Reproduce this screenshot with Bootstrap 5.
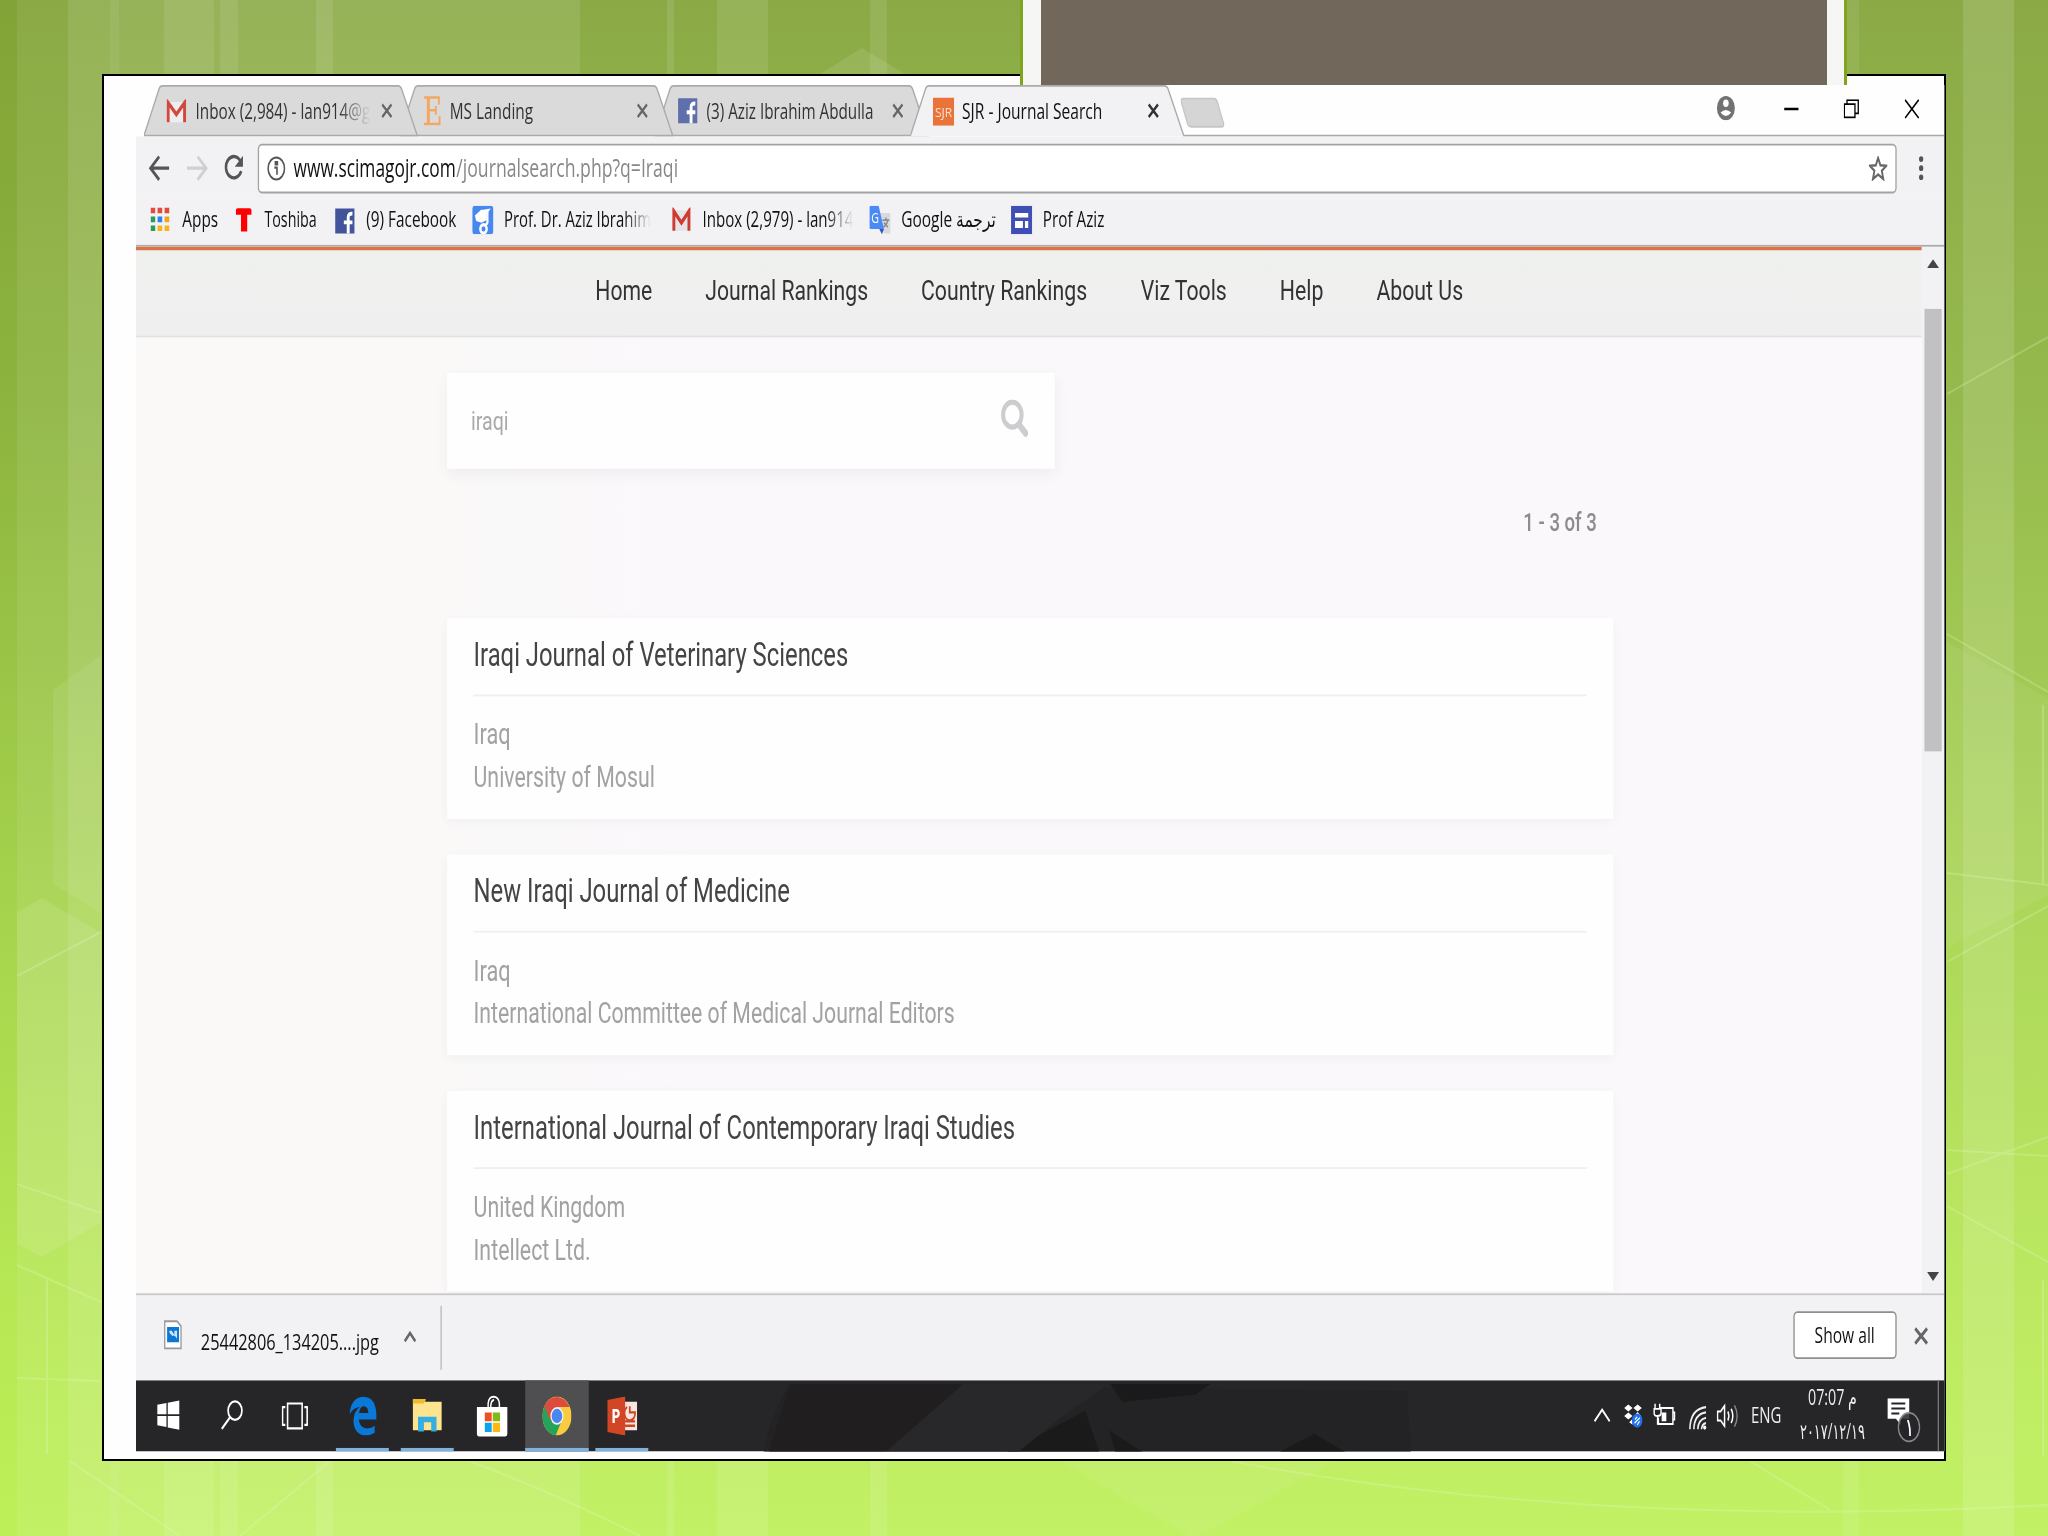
<!DOCTYPE html>
<html lang="en">
<head>
<meta charset="utf-8">
<title>SJR - Journal Search</title>
<link href="https://cdn.jsdelivr.net/npm/bootstrap@5.3.0/dist/css/bootstrap.min.css" rel="stylesheet">
<style>
html,body{margin:0;height:1536px;overflow:hidden}
.slide{position:relative;width:2048px;height:1536px;overflow:hidden;background:#a5cc52}
.slide-art{position:absolute;inset:0}
.frame{position:absolute;left:102px;top:74px;width:1844px;height:1387px;background:#fefefe;border:2px solid #000}
.tab-shape{position:absolute;left:1023px;top:0;width:821px;height:85px;background:#71675a;border:solid #f6f7f4;border-width:0 17px 0 18px;box-shadow:-3px 0 0 #7ea51c,3px 0 0 #7ea51c}
/* The captured desktop is 1366x768, stretched to the slide's picture size */
.desk{position:absolute;left:136px;top:84.5px;width:1366px;height:768.6px;transform-origin:0 0;transform:scale(1.3238,1.777);font-family:"Open Sans","DejaVu Sans",sans-serif;font-size:12px;line-height:16px;color:#111;background:#fff;overflow:hidden}
.desk svg{display:block;flex:none}
.fit{display:inline-block;white-space:nowrap;transform-origin:0 50%}
.strip{height:29px;background:#fefefe;padding-left:5.5px}
.tb{position:relative;width:206.5px;height:29px;margin-right:-13.5px;padding:0 0 0 17px;color:#333}
.tb:nth-child(1){z-index:3}
.tb:nth-child(2){z-index:2}
.tb>svg.shape{position:absolute;left:0;top:0}
.tb .ico{position:relative;width:16px;margin-right:4px}
.tb .lbl{position:relative;overflow:hidden;padding-top:1px}
.tb.on{z-index:4;color:#111}
.tb .x{position:relative;margin-left:4px}
.tools{height:34.5px;background:#f2f1f3;padding-top:4px}
.omni{width:1238px;height:28px;border:1px solid #a3a3a4;border-radius:3px;background:#fff;font-size:14px}
.marks{height:26.5px;background:#f2f1f3;color:#111}
.marks .it{height:25px;gap:8px}
.fade-end{-webkit-mask-image:linear-gradient(90deg,#000 82%,transparent);mask-image:linear-gradient(90deg,#000 82%,transparent)}
.view{height:590px;border-top:1px solid #aaa;overflow:hidden;background:linear-gradient(90deg,#faf9f8 0,#faf9f8 220px,#faf8fb 420px)}
.site{width:1349px;font-family:Roboto,sans-serif;font-weight:400}
.top-nav{height:51px;border-top:2.4px solid #dd7346;border-bottom:1px solid #e2e2e2;background:linear-gradient(#eff1ee,#f0eff0);gap:40px;font-size:16px;color:#333;padding-bottom:1.5px}
.hold{width:881px;margin-left:234.5px}
.find{width:459px;height:54px;margin-top:19.5px;background:#fefefe;box-shadow:0 3px 9px rgba(60,50,70,.06);padding:0 20px 0 18px;color:#aaa;font-size:15px}
.count{height:84px;padding:22px 12.5px 0 0;color:#8c8c8c;font-size:14px;font-weight:500}
.entry{height:113.2px;margin-bottom:20px;background:#fefefe;box-shadow:0 2px 7px rgba(60,50,70,.05);padding:8.5px 20px 0 20px;color:#a2a1a3;font-size:17px;line-height:24px}
.entry h2{font-size:19px;line-height:26px;height:36px;margin:0 0 9px;color:#444;font-weight:400;border-bottom:1px solid #efeef1}
.sbar{width:17px;background:#f2f1f4;padding-top:6.5px}
.thumb{width:13px;height:249px;background:#c1c0c2;margin-top:23.5px}
.shelf{height:48.6px;background:#f2f1f3;border-top:1px solid #c9c8cb}
.all-btn{width:77.5px;height:27px;border:1px solid #8f8f90;border-radius:3px;background:#fff;margin-top:-2px}
.bar{position:relative;height:40.5px;background:#262528;color:#eee}
.bar .wall{position:absolute;left:0;top:0}
.app{position:relative;width:48px;height:40px}
.app+.app{margin-left:1px}
.app.sys{margin-left:0;width:48px}
.app.run::after{content:"";position:absolute;left:4px;right:4px;bottom:0;height:2px;background:#7db3dd}
.app.cur{background:#4f4f51}
.app.cur::after{left:0;right:0}
.tray{position:absolute;left:1101px;top:0;height:40px}
.tray>*{flex:none}
.clock{line-height:18.8px;width:50px;margin-left:13px}
</style>
<script src="https://cdn.jsdelivr.net/npm/bootstrap@5.3.0/dist/js/bootstrap.bundle.min.js"></script>
</head>
<body>
<div class="slide">
<svg class="slide-art" width="2048" height="1536" viewBox="0 0 2048 1536">
<defs>
<linearGradient id="g" x1="0" y1="0" x2="0" y2="1"><stop offset="0" stop-color="#82a337"/><stop offset=".25" stop-color="#8cb33e"/><stop offset=".6" stop-color="#a6d44d"/><stop offset=".85" stop-color="#b7e854"/><stop offset="1" stop-color="#bdf058"/></linearGradient>
</defs>
<rect width="2048" height="1536" fill="url(#g)"/>
<g fill="#fff">
<rect x="17" width="2031" height="1536" opacity=".08"/>
<rect x="68" width="512" height="1536" opacity=".1"/>
<rect x="110" width="9" height="1536" opacity=".06"/>
<rect x="164" width="50" height="1536" opacity=".09"/><rect x="220" width="18" height="1536" opacity=".09"/>
<rect x="316" width="17" height="1536" opacity=".1"/>
<rect x="667" width="7" height="1536" opacity=".1"/><rect x="717" width="51" height="1536" opacity=".1"/><rect x="870" width="17" height="1536" opacity=".1"/>
<rect x="1843" width="16" height="1536" opacity=".08"/><rect x="1963" width="51" height="1536" opacity=".13"/>
<path opacity=".1" d="M17 912 42 898 101 933V1222L42 1257 17 1244Z"/>
<path opacity=".08" d="M53 690V884L101 913V655Z"/>
<path opacity=".1" d="M820 74 862 48 905 74Z"/>
<path opacity=".06" d="M1060 1461H1335L1200 1536H1190Z"/>
<path opacity=".06" d="M1947 642 2048 698V895L1947 948Z"/>
</g>
<g fill="none" stroke="#e6f7c0" stroke-width="2" opacity=".27">
<path d="M17 976 101 932M17 1184 101 1213M17 1265 101 1302M47 1278V1454M17 1378 101 1381"/>
<path d="M1947 394 2048 337M1947 634 2048 692M1947 873 2048 885M1947 962 2048 906M1947 1150 2048 1156M1947 1174 2048 1137M1947 1206 2048 1262M2043 1280V1456M2043 705V885"/>
<path d="M470 1461Q570 1500 640 1536M1230 1461Q1600 1530 2048 1505M70 1461 180 1536M240 1536 330 1461M1750 1461 1830 1510"/>
</g>
</svg>
<div class="frame"></div>
<div class="tab-shape"></div>

<div class="desk d-flex flex-column">
<!-- tab strip -->
<div class="strip d-flex flex-shrink-0">
 <div class="tb d-flex align-items-center">
  <svg class="shape" width="207" height="29"><path d="M0 28.5 11.5 2Q12.300 .5 14 .5H192Q194 .5 195 3L206.500 28.500Z" fill="#dadada" stroke="#aaa"/></svg>
  <svg class="ico" width="16" height="14" viewBox="0 0 16 14"><path d="M.5 1.500H14.500V13H.5Z" fill="#eee"/><path d="M1.300 13V2L7.500 8.500 13.700 2V13" fill="none" stroke="#d3483e" stroke-width="2.200"/></svg>
  <div class="lbl" style="width:134px;padding-left:2px"><div class="fade-end"><span class="fit" data-w="132">Inbox (2,984) - lan914@g</span></div></div>
  <svg class="x" width="9" height="9" style="margin-left:8px"><path d="M1 1 8 8M8 1 1 8" stroke="#666" stroke-width="1.500"/></svg>
 </div>
 <div class="tb d-flex align-items-center">
  <svg class="shape" width="207" height="29"><path d="M0 28.5 11.5 2Q12.300 .5 14 .5H192Q194 .5 195 3L206.500 28.500Z" fill="#dadada" stroke="#aaa"/></svg>
  <svg class="ico" width="16" height="17" viewBox="0 0 16 17"><path d="M1.500 1H12.800V5M2 16H13.300V11.500M5 1V16M5 8.200H10.500M10.500 5.800V10.800M1.500 16H5" fill="none" stroke="#f3a763" stroke-width="1.400"/><path d="M4.800 1V16" stroke="#f3a763" stroke-width="2.200"/></svg>
  <div class="lbl" style="width:138px;padding-left:1.500px"><span class="fit" data-w="63">MS Landing</span></div>
  <svg class="x" width="9" height="9"><path d="M1 1 8 8M8 1 1 8" stroke="#666" stroke-width="1.500"/></svg>
 </div>
 <div class="tb d-flex align-items-center">
  <svg class="shape" width="207" height="29"><path d="M0 28.5 11.5 2Q12.300 .5 14 .5H192Q194 .5 195 3L206.500 28.500Z" fill="#dadada" stroke="#aaa"/></svg>
  <svg class="ico" width="16" height="15" viewBox="0 0 16 15"><path d="M.5 .5H15V14.500H.5Z" fill="#5f6fab"/><path d="M10.300 14.500V8.500M7 8.300H13.500M10.300 9V5.500Q10.300 3.200 13.500 3.400" stroke="#fff" stroke-width="2.200" fill="none"/></svg>
  <div class="lbl" style="width:138px;padding-left:2px"><span class="fit" data-w="126">(3) Aziz Ibrahim Abdulla</span></div>
  <svg class="x" width="9" height="9"><path d="M1 1 8 8M8 1 1 8" stroke="#666" stroke-width="1.500"/></svg>
 </div>
 <div class="tb on d-flex align-items-center">
  <svg class="shape" width="207" height="29"><path d="M0 29 11.5 2Q12.300 .5 14 .5H192Q194 .5 195 3L206.500 29Z" fill="#f2f1f3"/><path d="M0 28.500 11.5 2Q12.300 .5 14 .5H192Q194 .5 195 3L206.500 28.500" fill="none" stroke="#aaa"/></svg>
  <svg class="ico" width="16" height="16" viewBox="0 0 16 16"><path d="M0 0H16V16H0Z" fill="#ea7339"/><text x="8" y="11" font-size="7.500" fill="#fbe0d0" text-anchor="middle" textLength="13" lengthAdjust="spacingAndGlyphs">SJR</text></svg>
  <div class="lbl" style="width:138px;padding-left:2px"><span class="fit" data-w="106">SJR - Journal Search</span></div>
  <svg class="x" width="9" height="9"><path d="M1 1 8 8M8 1 1 8" stroke="#333" stroke-width="1.700"/></svg>
 </div>
 <div class="flex-grow-1 border-bottom d-flex align-items-start" style="border-color:#aaa!important;margin-left:13.5px">
  <svg width="34" height="18" style="margin:7px 0 0 -2px"><path d="M2 .5H25Q27 .5 27.800 2.500L32.500 14.500Q33 16.500 31 16.500H8Q6 16.500 5.200 14.500L.8 3Q0 .5 2 .5Z" fill="#d5d5d5" stroke="#c6c6c6"/></svg>
  <div class="ms-auto d-flex align-items-center" style="height:26.500px;padding-right:19.500px">
   <svg width="14" height="14" viewBox="0 0 14 14"><circle cx="7" cy="7" r="6.800" fill="#727272"/><circle cx="7" cy="4.300" r="2.100" fill="#fff"/><path d="M3 9.500Q7 6.500 11 9.500Q7 13.500 3 9.500" fill="#fff"/></svg>
   <svg width="11" height="11" style="margin-left:37px"><path d="M0 5.500H11" stroke="#000" stroke-width="1.300"/></svg>
   <svg width="12" height="11" style="margin-left:34px"><path d="M.5 2.800H8.500V10.200H.5ZM2.500 2.500V.5H11V8H9" fill="none" stroke="#000"/></svg>
   <svg width="11" height="11" style="margin-left:34px"><path d="M.3 .3 10.700 10.700M10.700 .3 .3 10.700" stroke="#000"/></svg>
  </div>
 </div>
</div>
<!-- toolbar -->
<div class="tools d-flex flex-shrink-0">
 <svg width="92.400" height="28"><g fill="none" stroke="#555" stroke-width="1.900"><path d="M25 13.800H11.500M17.500 7.300 11 13.800 17.500 20.300"/><path stroke="#d0d0d0" d="M38.500 13.800H52.500M46.500 7.300 53 13.800 46.500 20.300"/><path d="M79 10A6 6 0 1 0 79.500 15.500"/></g><path d="M80.800 6.800V13H74.600Z" fill="#555"/></svg>
 <div class="omni d-flex align-items-center">
  <svg width="14" height="14" viewBox="0 0 14 14" style="margin:0 6px 0 6px"><circle cx="7" cy="7" r="6.200" fill="none" stroke="#555" stroke-width="1.200"/><path d="M5.500 6.500H7.500V10.500M6.300 3.300H7.800V4.700H6.300Z" fill="none" stroke="#555" stroke-width="1.200"/></svg>
  <span class="fit" data-w="122.500">www.scimagojr.com</span><span class="fit" data-w="167.500" style="color:#888">/journalsearch.php?q=Iraqi</span>
  <svg class="ms-auto" width="14" height="14" viewBox="0 0 14 14" style="margin-right:6px"><path d="M7 1 8.700 5.200 13.200 5.500 9.800 8.300 10.900 12.900 7 10.400 3.100 12.900 4.200 8.300 .8 5.500 5.300 5.200Z" fill="none" stroke="#666" stroke-width="1.400"/></svg>
 </div>
 <svg width="30" height="28" fill="#555"><circle cx="18.500" cy="8.700" r="1.600"/><circle cx="18.500" cy="13.800" r="1.600"/><circle cx="18.500" cy="18.900" r="1.600"/></svg>
</div>
<!-- bookmarks -->
<div class="marks d-flex flex-shrink-0" style="padding-left:10.500px">
 <div class="it d-flex align-items-center" style="width:62px"><svg width="16" height="14"><g><path d="M0 0H3.500V3.200H0ZM5.300 0H8.800V3.200H5.300ZM10.600 0H14.100V3.200H10.600Z" fill="#e04b3c"/><path d="M0 5H3.500V8.200H0Z" fill="#2b9a5a"/><path d="M5.300 5H8.800V8.200H5.300Z" fill="#2f80ed"/><path d="M10.600 5H14.100V8.200H10.600Z" fill="#efa524"/><path d="M0 10H3.500V13.200H0Z" fill="#2b9a5a"/><path d="M5.300 10H8.800V13.200H5.300ZM10.600 10H14.100V13.200H10.600Z" fill="#f5b51b"/></g></svg><span class="fit" data-w="27">Apps</span></div>
 <div class="it d-flex align-items-center" style="width:77px"><svg width="16" height="14"><path d="M2.500 1Q3 .3 4 .3H13Q14 .3 14.200 1.200V4H11V13.500H6.300V4H2.500Z" fill="#f00"/></svg><span class="fit" data-w="39.500">Toshiba</span></div>
 <div class="it d-flex align-items-center" style="width:104px"><svg width="16" height="15"><path d="M.5 .5H15V14.500H.5Z" fill="#42559b"/><path d="M10.300 14.500V8.500M7 8.300H13.500M10.300 9V5.500Q10.300 3.200 13.500 3.400" stroke="#fff" stroke-width="2.200" fill="none"/></svg><span class="fit" data-w="68">(9) Facebook</span></div>
 <div class="it d-flex align-items-center" style="width:150px"><svg width="16" height="16"><rect width="16" height="16" rx="2" fill="#4788f0"/><path d="M6 2.500 14 1.500 10.500 5Z" fill="#fff"/><path d="M2 5.500 7 2 11 4.500 11 8 7 9.500 3 8.500Z" fill="#fff"/><path d="M11.500 3V8Q12 10 9.500 11" fill="none" stroke="#fff" stroke-width="1.600"/><circle cx="8.500" cy="13" r="2.400" fill="none" stroke="#fff" stroke-width="1.800"/></svg><span class="fade-end"><span class="fit" data-w="111">Prof. Dr. Aziz Ibrahim</span></span></div>
 <div class="it d-flex align-items-center" style="width:150px"><svg width="16" height="14"><path d="M1.500 1.500H14.500V13H1.500Z" fill="#e5e5e5"/><path d="M2.300 13V2L8 8.500 13.700 2V13" fill="none" stroke="#cf3b32" stroke-width="2.200"/></svg><span class="fade-end"><span class="fit" data-w="114">Inbox (2,979) - lan914</span></span></div>
 <div class="it d-flex align-items-center" style="width:107.500px"><svg width="16" height="16"><path d="M7 4H15Q16 4 16 5V15.500H11Z" fill="#d9dadc"/><path d="M10 8H15M12.500 6.500V8M14 8Q13 11 10.500 12M11 9.500 14 12" stroke="#889" fill="none"/><path d="M1 0H7L11 13H1Q0 13 0 12V1Q0 0 1 0Z" fill="#4a8af4"/><path d="M7.500 13H11L9.500 16Z" fill="#3459b5"/><text x="1.500" y="9.500" font-size="8" fill="#fff">G</text></svg><span class="fit" data-w="71.500">Google ترجمة</span></div>
 <div class="it d-flex align-items-center"><svg width="16" height="16"><path d="M0 0H16V16H0Z" fill="#3f4fb5"/><path d="M3 4H13V6.500H3ZM3 8.500H9V12.500H3ZM10.500 8.500H13V12.500H10.500Z" fill="#fff"/></svg><span class="fit" data-w="46.500">Prof Aziz</span></div>
</div>
<!-- page -->
<div class="view d-flex flex-shrink-0">
 <div class="site">
  <nav class="top-nav d-flex justify-content-center align-items-center">
   <span class="fit" data-w="43">Home</span><span class="fit" data-w="123">Journal Rankings</span><span class="fit" data-w="125.500">Country Rankings</span><span class="fit" data-w="65">Viz Tools</span><span class="fit" data-w="33">Help</span><span class="fit" data-w="65.500">About Us</span>
  </nav>
  <div class="hold">
   <div class="find d-flex align-items-center justify-content-between"><span class="fit" data-w="28.500">iraqi</span><svg width="21" height="22" style="margin-top:-1px"><ellipse cx="9" cy="8.500" rx="7" ry="7" fill="none" stroke="#cdccce" stroke-width="3"/><path d="M14 14 19 19" stroke="#cdccce" stroke-width="4" stroke-linecap="round"/></svg></div>
   <div class="count text-end"><span class="fit" data-w="55.500">1 - 3 of 3</span></div>
   <article class="entry"><h2><span class="fit" data-w="283">Iraqi Journal of Veterinary Sciences</span></h2><div><span class="fit" data-w="28">Iraq</span></div><div><span class="fit" data-w="137">University of Mosul</span></div></article>
   <article class="entry"><h2><span class="fit" data-w="239">New Iraqi Journal of Medicine</span></h2><div><span class="fit" data-w="28">Iraq</span></div><div><span class="fit" data-w="363.500">International Committee of Medical Journal Editors</span></div></article>
   <article class="entry"><h2><span class="fit" data-w="409">International Journal of Contemporary Iraqi Studies</span></h2><div><span class="fit" data-w="114.500">United Kingdom</span></div><div><span class="fit" data-w="88.500">Intellect Ltd.</span></div></article>
  </div>
 </div>
 <div class="sbar d-flex flex-column align-items-center"><svg width="9" height="5"><path d="M0 5 4.500 0 9 5Z" fill="#444"/></svg><div class="thumb"></div><svg class="mt-auto" width="9" height="5" style="margin-bottom:7px"><path d="M0 0 4.500 5 9 0Z" fill="#444"/></svg></div>
</div>
<!-- download shelf -->
<div class="shelf d-flex align-items-center flex-shrink-0">
 <svg width="14" height="17" style="margin:-3px 14px 0 21px"><path d="M.7 .7H10L13 3.500V16H.7Z" fill="#fff" stroke="#999"/><path d="M2.500 4H11.500V12.500H2.500Z" fill="#0a78d6"/><path d="M4 6H6L8 8.500V6H10V10.500Q8 8 6.500 9L4.500 7.500Z" fill="#cfe6fa"/></svg>
 <span class="fit" data-w="134.500" style="margin-top:6.500px">25442806_134205....jpg</span>
 <svg width="10" height="7" style="margin:0 18px 0 18.500px"><path d="M1 6 5 1.300 9 6" fill="none" stroke="#666" stroke-width="1.700"/></svg>
 <div style="width:1px;height:36px;background:#bbb"></div>
 <div class="all-btn ms-auto d-flex align-items-center justify-content-center"><span class="fit" data-w="45.500">Show all</span></div>
 <svg width="11" height="10" style="margin:-2px 12.500px 0 13px"><path d="M1 .8 10 9.200M10 .8 1 9.200" stroke="#666" stroke-width="2"/></svg>
</div>
<!-- taskbar -->
<div class="bar d-flex flex-shrink-0">
 <svg class="wall" width="1366" height="41"><path d="M474 41Q480 18 494 2L960 6 963 41Z" fill="#232225"/><path d="M494 2H625L565 41H478Z" fill="#201e1f"/><path d="M656 41 717 17 728 41ZM735 28 762 41H740ZM862 41 890 30 915 41ZM736 2H812L800 8 745 12Z" fill="#1b1a1b"/><path d="M565 41 625 2H735L700 20 665 41Z" fill="#28272a"/></svg>
 <div class="app sys d-flex align-items-center justify-content-center"><svg width="17" height="17"><path d="M0 2.700 7 1.700V8H0ZM8 1.500 16.800 .3V8H8ZM0 9H7V15.200L0 14.200ZM8 9H16.800V16.700L8 15.500Z" fill="#fff"/></svg></div>
 <div class="app sys d-flex align-items-center justify-content-center"><svg width="17" height="17"><circle cx="10.800" cy="6" r="5.200" fill="none" stroke="#fff" stroke-width="1.300"/><path d="M7 9.800 .8 16.200" stroke="#fff" stroke-width="1.400"/></svg></div>
 <div class="app sys d-flex align-items-center justify-content-center"><svg width="20" height="16"><path d="M4.500 1H15.500V15H4.500ZM2.800 3H.7V13H2.800M17.200 3H19.300V13H17.200" fill="none" stroke="#fff" stroke-width="1.200"/></svg></div>
 <div class="app run d-flex align-items-center justify-content-center" style="margin-left:3px"><svg width="21" height="22" viewBox="0 0 21 22"><path fill="#0a78d7" d="M.3 10Q1.500 .3 11 .2Q20.300 .5 20.600 10.500V13H7.300Q8 18 13.500 18Q17 18 19.300 16.500V20.500Q16.500 22 12.500 22Q3.500 21.500 3.300 13.500Q3.500 8.500 8 6Q3 6.500 .3 10ZM7.500 9.300H14.500Q14.300 5.500 11 5.500Q8 5.800 7.500 9.300Z"/></svg></div>
 <div class="app run d-flex align-items-center justify-content-center"><svg width="22" height="20"><path d="M0 .8H9.500V2H22V18H0Z" fill="#fde48f"/><path d="M0 .5H10L8.500 3H0Z" fill="#f2b92c"/><path d="M4 18.800V10.500H18V18.800H14V13.500H8.500V18.800Z" fill="#35aee4"/></svg></div>
 <div class="app d-flex align-items-center justify-content-center"><svg width="24" height="24"><path d="M.5 7H23.500V22Q23.500 23.500 22 23.500H2Q.5 23.500 .5 22Z" fill="#fff"/><path d="M9 8V5Q9.500 1.200 13 1.200Q17 1.200 17.500 5V8M11 7Q11 3 13.500 3" fill="none" stroke="#fff" stroke-width="1.100"/><path d="M6.500 10H11.700V15H6.500Z" fill="#f04f24"/><path d="M12.500 10H18V15H12.500Z" fill="#7fba18"/><path d="M6.500 15.800H11.700V21H6.500Z" fill="#0ba4ef"/><path d="M12.500 15.800H18V21H12.500Z" fill="#fdb813"/></svg></div>
 <div class="app run cur d-flex align-items-center justify-content-center"><svg width="22" height="22" viewBox="0 0 22 22"><circle cx="11" cy="11" r="11" fill="#fcca3f"/><path d="M11 11 1.500 5.500A11 11 0 0 0 10 22L15 13Z" fill="#24a35a"/><path d="M11 11 6.200 13.800 1.500 5.500A11 11 0 0 1 20.500 6H11Z" fill="#dd4b3e"/><circle cx="11" cy="11" r="5" fill="#f1f1f1"/><circle cx="11" cy="11" r="4" fill="#4a87ee"/></svg></div>
 <div class="app run d-flex align-items-center justify-content-center"><svg width="23" height="22"><path d="M11 3H22.500V19H11Z" fill="#f7e5e0"/><path d="M13 14H21M13 16.500H21M17 5.500V9H21A4 4 0 1 1 15 6" fill="none" stroke="#d04424" stroke-width="1.300"/><path d="M0 2 13.500 0V22L0 20Z" fill="#d24625"/><text x="3" y="15" font-size="11" font-weight="700" fill="#fff">P</text></svg></div>

 <div class="tray d-flex align-items-center">
  <svg width="13" height="9"><path d="M.8 8 6.500 1.500 12.200 8" fill="none" stroke="#fff" stroke-width="1.300"/></svg>
  <svg width="14" height="14" style="margin-left:9.500px"><path d="M3.300 .5 6.500 2.500 3.300 4.500 .2 2.500ZM10.300 .5 13.500 2.500 10.300 4.500 7.200 2.500ZM3.300 5 6.500 7 3.300 9 .2 7ZM10.300 4.800 13 7H7.500ZM6.500 8.500V12L4 10.500Z" fill="#fff"/><circle cx="10" cy="9.600" r="4" fill="#2070f0"/><path d="M8 11 12 8M8.300 9 10 7.500M10 12 11.800 10" stroke="#fff" stroke-width=".8"/></svg>
  <svg width="17" height="13" style="margin-left:8.500px"><path d="M5 2.500H15V11.500H4V8M15 5H16.300V9H15M1.500 0V3M5 0V3M.8 3H6V5.500Q6 7 3.400 7Q.8 7 .8 5.500ZM3.400 7V12" fill="none" stroke="#fff" stroke-width="1.100"/><path d="M6.500 5H10V10H6.500Z" fill="#fff"/></svg>
  <svg width="14" height="14" style="margin-left:9.500px;margin-top:2px"><path d="M.8 13.500Q1 2 13 1M3.800 13.500Q4 5 13 4M6.800 13.500Q7 8 13 7M9.600 13.500Q9.800 10.500 13 10" fill="none" stroke="#eee" stroke-width="1.200"/><circle cx="12" cy="12.500" r="1.200" fill="#fff"/></svg>
  <svg width="17" height="14" style="margin-left:7px"><path d="M.7 4.500H3L6 1.300V12.700L3 9.500H.7ZM8.500 4.500Q10 7 8.500 9.500M11 3Q13.500 7 11 11" fill="none" stroke="#fff" stroke-width="1.100"/><path d="M13.500 1Q17.500 7 13.500 13" fill="none" stroke="#888"/></svg>
  <span class="fit" data-w="23" style="margin-left:9.500px">ENG</span>
  <div class="clock text-center"><div><span class="fit" data-w="37">07:07 م</span></div><div><span class="fit" data-w="49">٢٠١٧/١٢/١٩</span></div></div>
  <svg width="26" height="26" style="margin-left:17px;margin-top:7px"><path d="M0 0H16.500V11.500H10V15L6.500 11.500H0Z" fill="#fff"/><path d="M3 3H13.500M3 5.800H13.500M3 8.600H9" stroke="#262528" stroke-width="1.100"/><circle cx="16.300" cy="16.300" r="8" fill="#262528" fill-opacity=".85" stroke="#888"/><text x="13" y="21.500" font-size="14" fill="#fff" font-family="DejaVu Sans">١</text></svg>
  <div style="width:1px;height:40px;background:#77777a;margin-left:11.500px"></div>
 </div>
</div>
</div>
</div>
<script>
// Condense or widen each label to its measured width, keeping the flow width in step.
document.querySelectorAll('.fit[data-w]').forEach(function(el){
  var w=parseFloat(el.dataset.w), n=el.getBoundingClientRect().width/1.3238;
  el.style.transform='scaleX('+(w/n)+')';
  el.style.marginRight=(w-n)+'px';
});
</script>
</body>
</html>
